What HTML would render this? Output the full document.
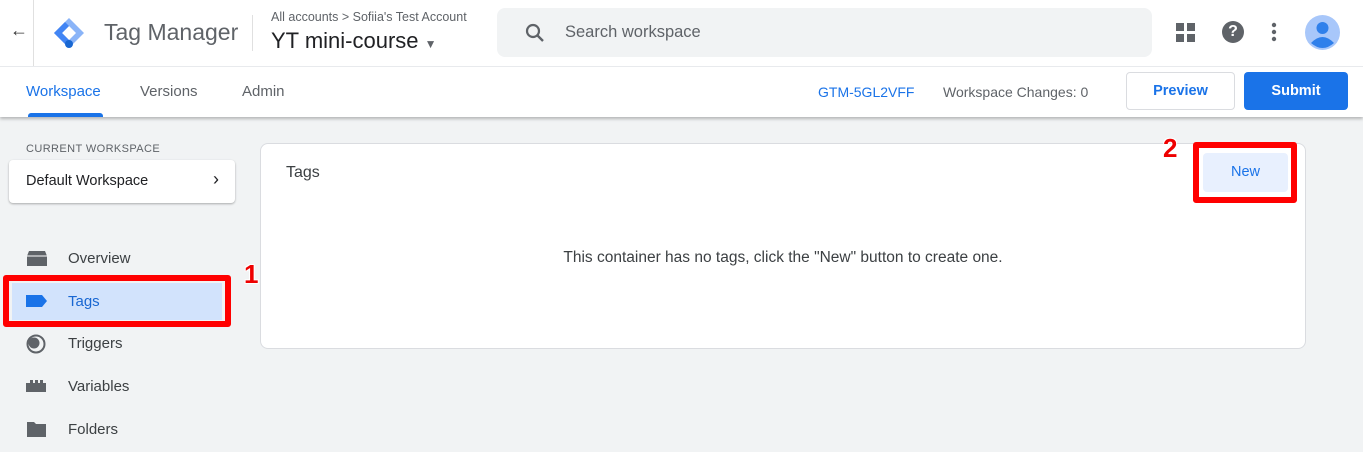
<!DOCTYPE html>
<html><head><style>
*{box-sizing:border-box;margin:0;padding:0}
body{width:1363px;height:452px;overflow:hidden;background:#f1f3f4;font-family:"Liberation Sans",Arial,sans-serif;position:relative;color:#3c4043}
.a{position:absolute}
.num{font-size:26px;font-weight:bold;color:#e00;text-shadow:1px 1px 0 #fff,-1px -1px 0 #fff,1px -1px 0 #fff,-1px 1px 0 #fff}
</style></head><body>
<div class="a" style="left:0;top:0;width:1363px;height:117px;background:#fff;box-shadow:0 2px 3px rgba(0,0,0,.25)"></div>
<div class="a" style="left:0;top:66px;width:1363px;height:1px;background:#e8eaed"></div>
<div class="a" style="left:33px;top:0;width:1px;height:66px;background:#e0e0e0"></div>
<div class="a" style="left:10px;top:20px;font-size:18px;color:#333">←</div>
<svg class="a" style="left:52px;top:16px" width="34" height="34" viewBox="0 0 34 34"><path d="M17 2 L32 17 L17 32 L2 17Z" fill="#8ab4f8"/><path d="M17 10 L24 17 L17 24 L10 17Z" fill="#fff"/><path d="M2 17 L17 32 L21 28 L10 17 L17 10 L13 6Z" fill="#4285f4"/><circle cx="17" cy="28" r="4" fill="#1967d2"/></svg>
<div class="a" style="left:104px;top:19px;font-size:23px;color:#5f6368">Tag Manager</div>
<div class="a" style="left:252px;top:15px;width:1px;height:36px;background:#e0e0e0"></div>
<div class="a" style="left:271px;top:10px;font-size:12.5px;color:#5f6368">All accounts &gt; Sofiia's Test Account</div>
<div class="a" style="left:271px;top:28px;font-size:22px;color:#202124">YT mini-course <span style="font-size:12px;color:#5f6368">▼</span></div>
<div class="a" style="left:497px;top:8px;width:655px;height:49px;background:#f1f3f4;border-radius:8px"></div>
<svg class="a" style="left:524px;top:22px" width="22" height="22" viewBox="0 0 22 22"><circle cx="9" cy="9" r="6" fill="none" stroke="#5f6368" stroke-width="2.2"/><path d="M13.5 13.5 L19 19" stroke="#5f6368" stroke-width="2.4"/></svg>
<div class="a" style="left:565px;top:23px;font-size:16.5px;color:#5f6368">Search workspace</div>
<svg class="a" style="left:1176px;top:23px" width="20" height="20"><rect x="0" y="0" width="8" height="8" fill="#5f6368"/><rect x="11" y="0" width="8" height="8" fill="#5f6368"/><rect x="0" y="11" width="8" height="8" fill="#5f6368"/><rect x="11" y="11" width="8" height="8" fill="#5f6368"/></svg>
<div class="a" style="left:1222px;top:21px;width:22px;height:22px;border-radius:50%;background:#5f6368;color:#fff;font-weight:bold;font-size:16px;text-align:center;line-height:22px">?</div>
<svg class="a" style="left:1271px;top:22px" width="6" height="20"><circle cx="3" cy="3" r="2.2" fill="#5f6368"/><circle cx="3" cy="10" r="2.2" fill="#5f6368"/><circle cx="3" cy="17" r="2.2" fill="#5f6368"/></svg>
<svg class="a" style="left:1305px;top:15px" width="35" height="35" viewBox="0 0 35 35"><circle cx="17.5" cy="17.5" r="17.5" fill="#a8c7fa"/><circle cx="17.5" cy="13" r="6" fill="#1a73e8" opacity=".85"/><path d="M6 28 Q17.5 16 29 28 Q17.5 38 6 28Z" fill="#1a73e8" opacity=".85"/></svg>
<div class="a" style="left:26px;top:83px;font-size:15px;color:#1a73e8">Workspace</div>
<div class="a" style="left:28px;top:113px;width:75px;height:4px;background:#1a73e8;border-radius:3px 3px 0 0"></div>
<div class="a" style="left:140px;top:83px;font-size:15px;color:#5f6368">Versions</div>
<div class="a" style="left:242px;top:83px;font-size:15px;color:#5f6368">Admin</div>
<div class="a" style="left:818px;top:84px;font-size:14px;color:#1a73e8">GTM-5GL2VFF</div>
<div class="a" style="left:943px;top:84px;font-size:14px;color:#5f6368">Workspace Changes: 0</div>
<div class="a" style="left:1126px;top:72px;width:109px;height:38px;border:1px solid #dadce0;border-radius:4px;color:#1a73e8;font-size:14.5px;text-align:center;line-height:36px;font-weight:bold">Preview</div>
<div class="a" style="left:1244px;top:72px;width:104px;height:38px;background:#1a73e8;border-radius:4px;color:#fff;font-size:14.5px;text-align:center;line-height:38px;font-weight:bold">Submit</div>
<div class="a" style="left:26px;top:143px;font-size:11px;color:#5f6368;letter-spacing:.4px">CURRENT WORKSPACE</div>
<div class="a" style="left:9px;top:160px;width:226px;height:43px;background:#fff;border-radius:4px;box-shadow:0 1px 2px rgba(0,0,0,.3);font-size:14.5px;color:#202124;padding:13px 0 0 17px">Default Workspace<span style="position:absolute;right:16px;top:9px;font-size:18px">›</span></div>
<div class="a" style="left:12px;top:283px;width:210px;height:37px;background:#d2e3fc"></div>
<div class="a" style="left:3px;top:275px;width:228px;height:52px;border:6px solid #f00;border-radius:3px"></div>
<div class="a num" style="left:244px;top:259px">1</div>
<svg class="a" style="left:26px;top:251px" width="22" height="15"><path d="M3 0 H19 L21 5 V15 H1 V5Z" fill="#5f6368"/><path d="M1 5 H21" stroke="#fff" stroke-width="1"/></svg>
<svg class="a" style="left:26px;top:294px" width="22" height="14"><path d="M0 1 H16 L21 7 L16 13 H0Z" fill="#1a73e8"/></svg>
<svg class="a" style="left:26px;top:334px" width="22" height="20"><circle cx="10" cy="10" r="8.5" fill="none" stroke="#5f6368" stroke-width="2"/><circle cx="8" cy="9" r="5.5" fill="#5f6368"/></svg>
<svg class="a" style="left:26px;top:380px" width="22" height="12"><path d="M0 3 H4 V0 H7 V3 H9 V0 H12 V3 H14 V0 H17 V3 H20 V12 H0Z" fill="#5f6368"/></svg>
<svg class="a" style="left:27px;top:421px" width="20" height="16"><path d="M0 1 H7 L9 3 H19 V16 H0Z" fill="#5f6368"/></svg>
<div class="a" style="left:68px;top:250px;font-size:15px;color:#3c4043">Overview</div>
<div class="a" style="left:68px;top:293px;font-size:15px;color:#1967d2">Tags</div>
<div class="a" style="left:68px;top:335px;font-size:15px;color:#3c4043">Triggers</div>
<div class="a" style="left:68px;top:378px;font-size:15px;color:#3c4043">Variables</div>
<div class="a" style="left:68px;top:421px;font-size:15px;color:#3c4043">Folders</div>
<div class="a" style="left:260px;top:143px;width:1046px;height:206px;background:#fff;border:1px solid #dadce0;border-radius:8px"></div>
<div class="a" style="left:286px;top:164px;font-size:16px;color:#3c4043">Tags</div>
<div class="a" style="left:0;width:1566px;top:249px;text-align:center;font-size:15.5px;color:#3c4043">This container has no tags, click the "New" button to create one.</div>
<div class="a" style="left:1203px;top:153px;width:85px;height:39px;background:#e8f0fe;border-radius:4px;color:#1a73e8;font-size:14.5px;text-align:center;line-height:39px">New</div>
<div class="a" style="left:1193px;top:142px;width:104px;height:61px;border:6px solid #f00;border-radius:3px"></div>
<div class="a num" style="left:1163px;top:133px">2</div>
</body></html>
